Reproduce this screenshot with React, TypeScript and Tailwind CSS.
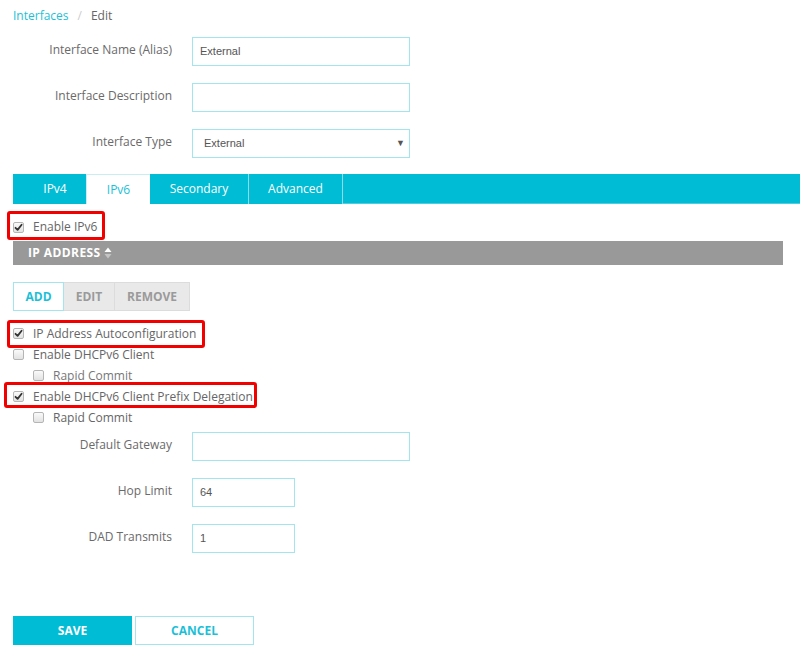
import React from "react";

function Box({ checked }: { checked?: boolean }) {
  return (
    <span className="relative inline-flex h-[11px] w-[11px] shrink-0 items-center justify-center rounded-[2px] border border-[#b5b5b5] bg-gradient-to-b from-[#fafafa] to-[#e2e2e2]">
      {checked && (
        <svg width="9" height="9" viewBox="0 0 9 9" className="absolute">
          <path d="M1.5 4.8 L3.6 6.9 L7.6 1.8" fill="none" stroke="#333" strokeWidth="1.8" strokeLinecap="round" strokeLinejoin="round" />
        </svg>
      )}
    </span>
  );
}

function CheckRow({
  checked,
  label,
  indent,
  light,
}: {
  checked?: boolean;
  label: string;
  indent?: boolean;
  light?: boolean;
}) {
  return (
    <div className={`flex h-[21px] items-center gap-[9px] ${indent ? "pl-[20px]" : ""}`}>
      <Box checked={checked} />
      <span className={light ? "text-[#777]" : "text-[#666]"}>{label}</span>
    </div>
  );
}

function FieldRow({
  label,
  children,
}: {
  label: string;
  children: React.ReactNode;
}) {
  return (
    <div className="flex items-center">
      <div className="mb-[3px] w-[159px] text-right text-[12px] text-[#6a6a6a]">{label}</div>
      <div className="ml-[20px]">{children}</div>
    </div>
  );
}

function TextInput({ value, width }: { value?: string; width: string }) {
  return (
    <div
      className={`flex h-[29px] ${width} items-center border border-[#a3e4ee] bg-white pl-[7px] font-['Liberation_Sans',Arial,sans-serif] text-[11px] text-[#555]`}
    >
      {value}
    </div>
  );
}

export default function App() {
  return (
    <div className="h-[654px] w-[800px] overflow-hidden bg-white pl-[13px] font-['Open_Sans',sans-serif] text-[12px] text-[#666]">
      {/* breadcrumb */}
      <div className="flex h-[31px] items-center text-[12px]">
        <span className="text-[#1dbfd7]">Interfaces</span>
        <span className="mx-[9px] text-[#ccc]">/</span>
        <span className="text-[#666]">Edit</span>
      </div>

      {/* top form */}
      <div className="mt-[6px] flex flex-col gap-[17px]">
        <FieldRow label="Interface Name (Alias)">
          <TextInput value="External" width="w-[218px]" />
        </FieldRow>
        <FieldRow label="Interface Description">
          <TextInput width="w-[218px]" />
        </FieldRow>
        <FieldRow label="Interface Type">
          <div className="flex h-[29px] w-[218px] items-center justify-between border border-[#a3e4ee] bg-white pl-[11px] pr-[4px] font-['Liberation_Sans',Arial,sans-serif] text-[11px] text-[#555]">
            <span>External</span>
            <span className="text-[9px] text-[#555]">▼</span>
          </div>
        </FieldRow>
      </div>

      {/* tabs */}
      <div className="mt-[16px] flex h-[30px] bg-[#00bcd4] text-[12px] text-white">
        <div className="flex w-[73px] items-center justify-center pl-[11px]">IPv4</div>
        <div className="flex w-[64px] items-center justify-center border-l border-t border-[#c8eef4] bg-white text-[#1dbfd7]">
          IPv6
        </div>
        <div className="flex w-[99px] items-center justify-center border-r border-[#8ddbe8]">Secondary</div>
        <div className="flex w-[94px] items-center justify-center border-r border-[#8ddbe8]">Advanced</div>
        <div className="flex-1 border-b border-[#4fcde0]" />
      </div>

      {/* enable ipv6 */}
      <div className="mt-[13px] flex h-[20px]">
        <div className="relative flex items-center gap-[9px]">
          <Box checked />
          <span>Enable IPv6</span>
          <div className="pointer-events-none absolute -bottom-[3px] -left-[6px] -right-[8px] -top-[6px] rounded-[3px] border-[3px] border-[#f20000]" />
        </div>
      </div>

      {/* gray header */}
      <div className="mr-[17px] mt-[4px] flex h-[24px] items-center bg-[#999] pl-[15px] text-[12px] font-bold tracking-[0.4px] text-white">
        <span>IP ADDRESS</span>
        <svg width="8" height="12" viewBox="0 0 8 12" className="ml-[3px]">
          <path d="M4 0.5 L7.5 5 L0.5 5 Z" fill="#ffffff" />
          <path d="M4 11.5 L7.5 7 L0.5 7 Z" fill="#c4c4c4" />
        </svg>
      </div>

      {/* add edit remove */}
      <div className="mt-[17px] flex h-[29px] text-[12px] font-bold">
        <div className="flex w-[51px] items-center justify-center border border-[#a3e4ee] bg-white text-[#1dbfd7]">ADD</div>
        <div className="flex w-[51px] items-center justify-center border-y border-r border-[#dcdcdc] bg-[#e9e9e9] text-[#9a9a9a]">EDIT</div>
        <div className="flex w-[75px] items-center justify-center border-y border-r border-[#dcdcdc] bg-[#e9e9e9] text-[#9a9a9a]">REMOVE</div>
      </div>

      {/* check list */}
      <div className="mt-[12px] flex flex-col">
        <div className="flex">
          <div className="relative">
            <CheckRow checked label="IP Address Autoconfiguration" />
            <div className="pointer-events-none absolute -bottom-[4px] -left-[6px] -right-[9px] -top-[3px] rounded-[3px] border-[3px] border-[#f20000]" />
          </div>
        </div>
        <CheckRow label="Enable DHCPv6 Client" />
        <CheckRow label="Rapid Commit" indent light />
        <div className="flex">
          <div className="relative">
            <CheckRow checked label="Enable DHCPv6 Client Prefix Delegation" />
            <div className="pointer-events-none absolute -bottom-[1px] -left-[9px] -right-[4px] -top-[4px] rounded-[3px] border-[3px] border-[#f20000]" />
          </div>
        </div>
        <CheckRow label="Rapid Commit" indent />
      </div>

      {/* bottom form */}
      <div className="mt-[4px] flex flex-col gap-[17px]">
        <FieldRow label="Default Gateway">
          <TextInput width="w-[218px]" />
        </FieldRow>
        <FieldRow label="Hop Limit">
          <TextInput value="64" width="w-[103px]" />
        </FieldRow>
        <FieldRow label="DAD Transmits">
          <TextInput value="1" width="w-[103px]" />
        </FieldRow>
      </div>

      {/* save / cancel */}
      <div className="mt-[63px] flex gap-[3px] text-[12px] font-bold">
        <div className="flex h-[29px] w-[119px] items-center justify-center bg-[#00bcd4] text-white">SAVE</div>
        <div className="flex h-[29px] w-[119px] items-center justify-center border border-[#a3e4ee] bg-white text-[#1dbfd7]">CANCEL</div>
      </div>
    </div>
  );
}
